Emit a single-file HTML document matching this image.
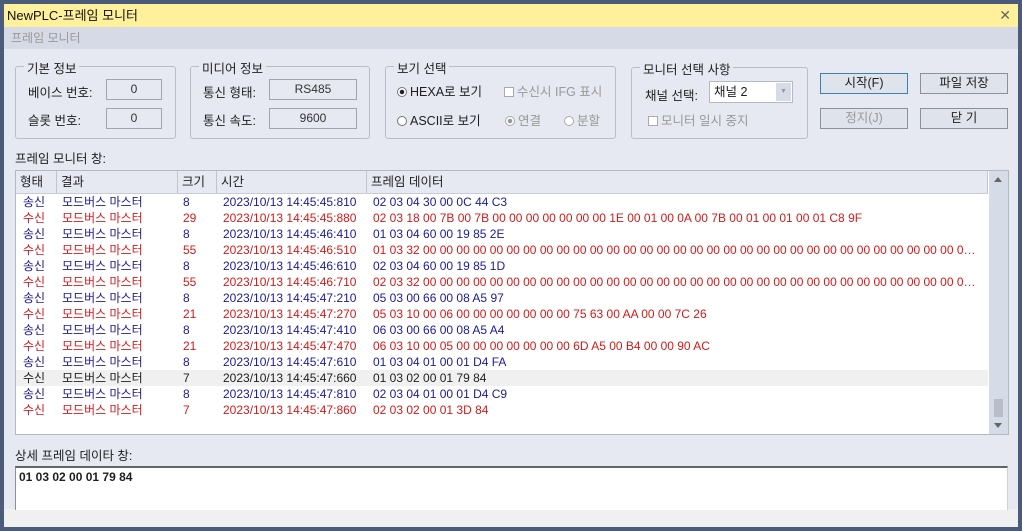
<!DOCTYPE html>
<html><head><meta charset="utf-8"><style>
*{margin:0;padding:0;box-sizing:border-box}
body{width:1022px;height:531px;background:#4a5b7c;font-family:"Liberation Sans","Noto Sans CJK KR",sans-serif;font-size:12px;color:#1e1e1e;position:relative;overflow:hidden}
.a{position:absolute}
#title{left:4px;top:4px;width:1014px;height:23px;background:#fff09c;font-size:13px;line-height:23px;padding-left:3px;color:#111}
#close{right:7px;top:0;color:#666;font-size:14px}
#sub{left:4px;top:27px;width:1014px;height:22px;background:#d5dae6;color:#999;line-height:22px;padding-left:7px;font-size:12px}
#body{left:4px;top:49px;width:1014px;height:460px;background:#e6e9f2}
#foot{left:4px;top:509px;width:1014px;height:18px;background:#f0f0f0}
.g{position:absolute;border:1px solid #b9bdc6;border-radius:3px}
.gt{position:absolute;top:-9px;left:8px;background:#e6e9f2;padding:0 3px;font-size:12.5px;color:#1e1e1e}
.tb{position:absolute;background:#e6e9f2;border:1px solid #a0a4ab;text-align:center;line-height:18px;color:#333}
.btn{position:absolute;width:88px;height:21px;background:#dfe3ec;border:1px solid #8c909a;text-align:center;line-height:19px;font-size:12.5px}
.lbl{position:absolute;font-size:12.5px}
.rad{display:inline-block;width:10px;height:10px;border:1px solid #777;border-radius:50%;vertical-align:-1px;margin-right:3px;background:#fff;position:relative}
.chk{display:inline-block;width:10px;height:10px;border:1px solid #aaa;vertical-align:-1px;margin-right:3px;background:#fff}
#list{left:15px;top:170px;width:994px;height:265px;background:#fff;border:1px solid #b4b8c0}
#hdr{left:0;top:0;width:972px;height:23px;background:#e6e9f2;border-bottom:1px solid #c8ccd4}
.hc{position:absolute;top:0;height:22px;line-height:22px;padding-left:4px;border-right:1px solid #c0c4cc;font-size:12.5px}
.r{position:absolute;left:0;width:972px;height:16px;line-height:16px;white-space:nowrap}
.r span{position:absolute;top:0;overflow:hidden;text-overflow:ellipsis}
.s{color:#1b1b96}.v{color:#d21a1a}.k{color:#1e1e1e}
#sb{left:973px;top:0;width:19px;height:263px;background:#d6dbe8}
</style></head><body>
<div class="a" id="title">NewPLC-프레임 모니터<span class="a" id="close">✕</span></div>
<div class="a" id="sub">프레임 모니터</div>
<div class="a" id="body"></div>
<div class="a" id="foot"></div>

<div class="g" style="left:15px;top:66px;width:161px;height:73px"><div class="gt">기본 정보</div></div>
<div class="lbl" style="left:28px;top:82px">베이스 번호:</div>
<div class="tb" style="left:106px;top:79px;width:56px;height:21px">0</div>
<div class="lbl" style="left:28px;top:110px">슬롯 번호:</div>
<div class="tb" style="left:106px;top:108px;width:56px;height:21px">0</div>

<div class="g" style="left:190px;top:66px;width:180px;height:73px"><div class="gt">미디어 정보</div></div>
<div class="lbl" style="left:203px;top:82px">통신 형태:</div>
<div class="tb" style="left:269px;top:79px;width:88px;height:21px">RS485</div>
<div class="lbl" style="left:203px;top:110px">통신 속도:</div>
<div class="tb" style="left:269px;top:108px;width:88px;height:21px">9600</div>

<div class="g" style="left:385px;top:66px;width:231px;height:73px"><div class="gt">보기 선택</div></div>
<div class="lbl" style="left:397px;top:81px"><span class="rad" style="background:radial-gradient(#222 2px,#fff 2.5px)"></span>HEXA로 보기</div>
<div class="lbl" style="left:504px;top:81px;color:#999"><span class="chk"></span>수신시 IFG 표시</div>
<div class="lbl" style="left:397px;top:110px"><span class="rad"></span>ASCII로 보기</div>
<div class="lbl" style="left:505px;top:110px;color:#999"><span class="rad" style="border-color:#aaa;background:radial-gradient(#999 2px,#fff 2.5px)"></span>연결</div>
<div class="lbl" style="left:564px;top:110px;color:#999"><span class="rad" style="border-color:#aaa"></span>분할</div>

<div class="g" style="left:631px;top:67px;width:177px;height:72px"><div class="gt">모니터 선택 사항</div></div>
<div class="lbl" style="left:645px;top:85px">채널 선택:</div>
<div class="a" style="left:709px;top:81px;width:84px;height:22px;background:#fff;border:1px solid #b4b8c0;line-height:20px;padding-left:4px;font-size:12.5px">채널 2<span class="a" style="right:1px;top:1px;width:15px;height:18px;background:#d6dbe8;color:#999;font-size:7px;text-align:center;line-height:18px">▼</span></div>
<div class="lbl" style="left:648px;top:110px;color:#999"><span class="chk"></span>모니터 일시 중지</div>

<div class="btn" style="left:820px;top:73px;border-color:#3c7fb1">시작(F)</div>
<div class="btn" style="left:920px;top:73px">파일 저장</div>
<div class="btn" style="left:820px;top:108px;color:#999">정지(J)</div>
<div class="btn" style="left:920px;top:108px">닫 기</div>

<div class="lbl" style="left:15px;top:148px">프레임 모니터 창:</div>

<div class="a" id="list">
<div class="a" id="hdr">
<div class="hc" style="left:0;width:41px">형태</div>
<div class="hc" style="left:41px;width:121px">결과</div>
<div class="hc" style="left:162px;width:39px">크기</div>
<div class="hc" style="left:201px;width:150px">시간</div>
<div class="hc" style="left:351px;width:621px">프레임 데이터</div>
</div>
<div class="a" id="sb">
<div class="a" style="left:5px;top:6px;width:0;height:0;border-left:4px solid transparent;border-right:4px solid transparent;border-bottom:5px solid #666"></div>
<div class="a" style="left:5px;top:228px;width:9px;height:18px;background:#b8bdc9"></div>
<div class="a" style="left:5px;top:252px;width:0;height:0;border-left:4px solid transparent;border-right:4px solid transparent;border-top:5px solid #666"></div>
</div>
<div id="rows"></div>
</div>

<div class="lbl" style="left:15px;top:445px">상세 프레임 데이타 창:</div>
<div class="a" style="left:15px;top:466px;width:993px;height:44px;background:#fff;border-top:2px solid #646464;border-left:1px solid #909090;border-right:1px solid #d0d0d0;font-weight:bold;padding:2px 3px;font-size:12px">01 03 02 00 01 79 84</div>

<script>
var z=" 00".repeat(60)+" ...";
var d=[
["s","송신","8","45:45:810","02 03 04 30 00 0C 44 C3"],
["v","수신","29","45:45:880","02 03 18 00 7B 00 7B 00 00 00 00 00 00 00 1E 00 01 00 0A 00 7B 00 01 00 01 00 01 C8 9F"],
["s","송신","8","45:46:410","01 03 04 60 00 19 85 2E"],
["v","수신","55","45:46:510","01 03 32"+z],
["s","송신","8","45:46:610","02 03 04 60 00 19 85 1D"],
["v","수신","55","45:46:710","02 03 32"+z],
["s","송신","8","45:47:210","05 03 00 66 00 08 A5 97"],
["v","수신","21","45:47:270","05 03 10 00 06 00 00 00 00 00 00 00 75 63 00 AA 00 00 7C 26"],
["s","송신","8","45:47:410","06 03 00 66 00 08 A5 A4"],
["v","수신","21","45:47:470","06 03 10 00 05 00 00 00 00 00 00 00 6D A5 00 B4 00 00 90 AC"],
["s","송신","8","45:47:610","01 03 04 01 00 01 D4 FA"],
["k","수신","7","45:47:660","01 03 02 00 01 79 84"],
["s","송신","8","45:47:810","02 03 04 01 00 01 D4 C9"],
["v","수신","7","45:47:860","02 03 02 00 01 3D 84"]];
var h="";
d.forEach(function(r,i){
h+='<div class="r '+r[0]+'" style="top:'+(23+i*16)+'px;'+(i==11?'background:#f0f0f0':'')+'">'+
'<span style="left:7px">'+r[1]+'</span><span style="left:46px">모드버스 마스터</span><span style="left:167px">'+r[2]+'</span>'+
'<span style="left:207px">2023/10/13 14:'+r[3]+'</span><span style="left:357px;width:605px">'+r[4]+'</span></div>';
});
document.getElementById("rows").innerHTML=h;
</script>
</body></html>
